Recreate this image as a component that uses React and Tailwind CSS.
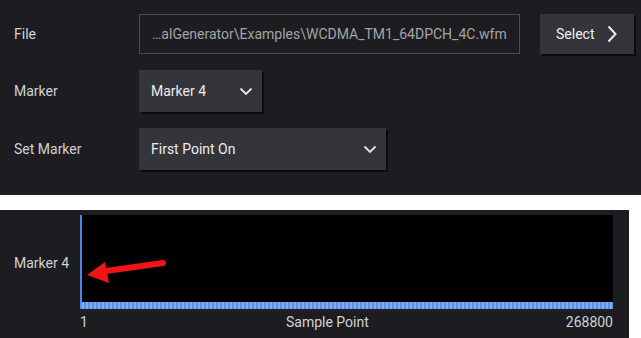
import React from "react";

const ChevronDown = () => (
  <svg width="14" height="9" viewBox="0 0 14 9" className="shrink-0">
    <path d="M1.5 1.5 L7 7 L12.5 1.5" fill="none" stroke="#e6e6e6" strokeWidth="1.8" />
  </svg>
);

const ChevronRight = () => (
  <svg width="10" height="18" viewBox="0 0 10 18" className="shrink-0">
    <path d="M1.5 1.5 L8.5 9 L1.5 16.5" fill="none" stroke="#ececec" strokeWidth="2" />
  </svg>
);

const Dropdown = ({ value, width }) => (
  <div
    className={`${width} h-[42px] bg-[#34343b] shadow-[2px_2px_0_#0b0b0d] flex items-center justify-between pl-3 pr-[9px] text-[#ececec]`}
  >
    <span>{value}</span>
    <ChevronDown />
  </div>
);

export default function App() {
  return (
    <div className="w-[641px] h-[338px] bg-white text-[14px] font-['Roboto','Liberation_Sans',sans-serif] overflow-hidden">
      {/* settings panel */}
      <div className="h-[195px] bg-[#1d1d21] pt-[14px] flex flex-col gap-[16px]">
        <div className="flex items-center">
          <div className="w-[139px] pl-[14px] text-[#d2d2d2]">File</div>
          <div className="w-[381px] h-[40px] border border-[#4b4b50] flex items-center pl-3 text-[#a3a3a6] overflow-hidden whitespace-nowrap">
            …alGenerator\Examples\WCDMA_TM1_64DPCH_4C.wfm
          </div>
          <button className="ml-[20px] w-[94px] h-[40px] bg-[#34343b] shadow-[2px_2px_0_#0b0b0d] flex items-center pl-4 gap-[13px] text-[#f0f0f0]">
            <span>Select</span>
            <ChevronRight />
          </button>
        </div>
        <div className="flex items-center">
          <div className="w-[139px] pl-[14px] text-[#d2d2d2]">Marker</div>
          <Dropdown value="Marker 4" width="w-[123px]" />
        </div>
        <div className="flex items-center">
          <div className="w-[139px] pl-[14px] text-[#d2d2d2]">Set Marker</div>
          <Dropdown value="First Point On" width="w-[247px]" />
        </div>
      </div>

      {/* marker chart panel */}
      <div className="mt-[15px] w-[629px] h-[128px] bg-[#1d1d21] pt-[5px] flex">
        <div className="w-[80px] pl-[14px] pt-[38px] text-[#d2d2d2]">Marker 4</div>
        <div className="w-[533px] flex flex-col">
          <div className="relative h-[87px] bg-black border-l-2 border-[#4a86e8]">
            <svg className="absolute left-0 top-0" width="100" height="87" viewBox="80 215 100 87">
              <line x1="104" y1="271" x2="161" y2="263" stroke="#f01414" strokeWidth="6" strokeLinecap="round" />
              <polygon points="85,275 103,262 107,283" fill="#f01414" />
            </svg>
          </div>
          <div className="h-[7px] bg-[repeating-linear-gradient(90deg,#5a8ee6_0px,#5a8ee6_2px,#7eabf3_2px,#7eabf3_4px)]" />
          <div className="relative flex justify-between pt-[3px] text-[#d2d2d2]">
            <span>1</span>
            <span className="absolute left-[206px] top-[3px]">Sample Point</span>
            <span>268800</span>
          </div>
        </div>
      </div>
    </div>
  );
}
